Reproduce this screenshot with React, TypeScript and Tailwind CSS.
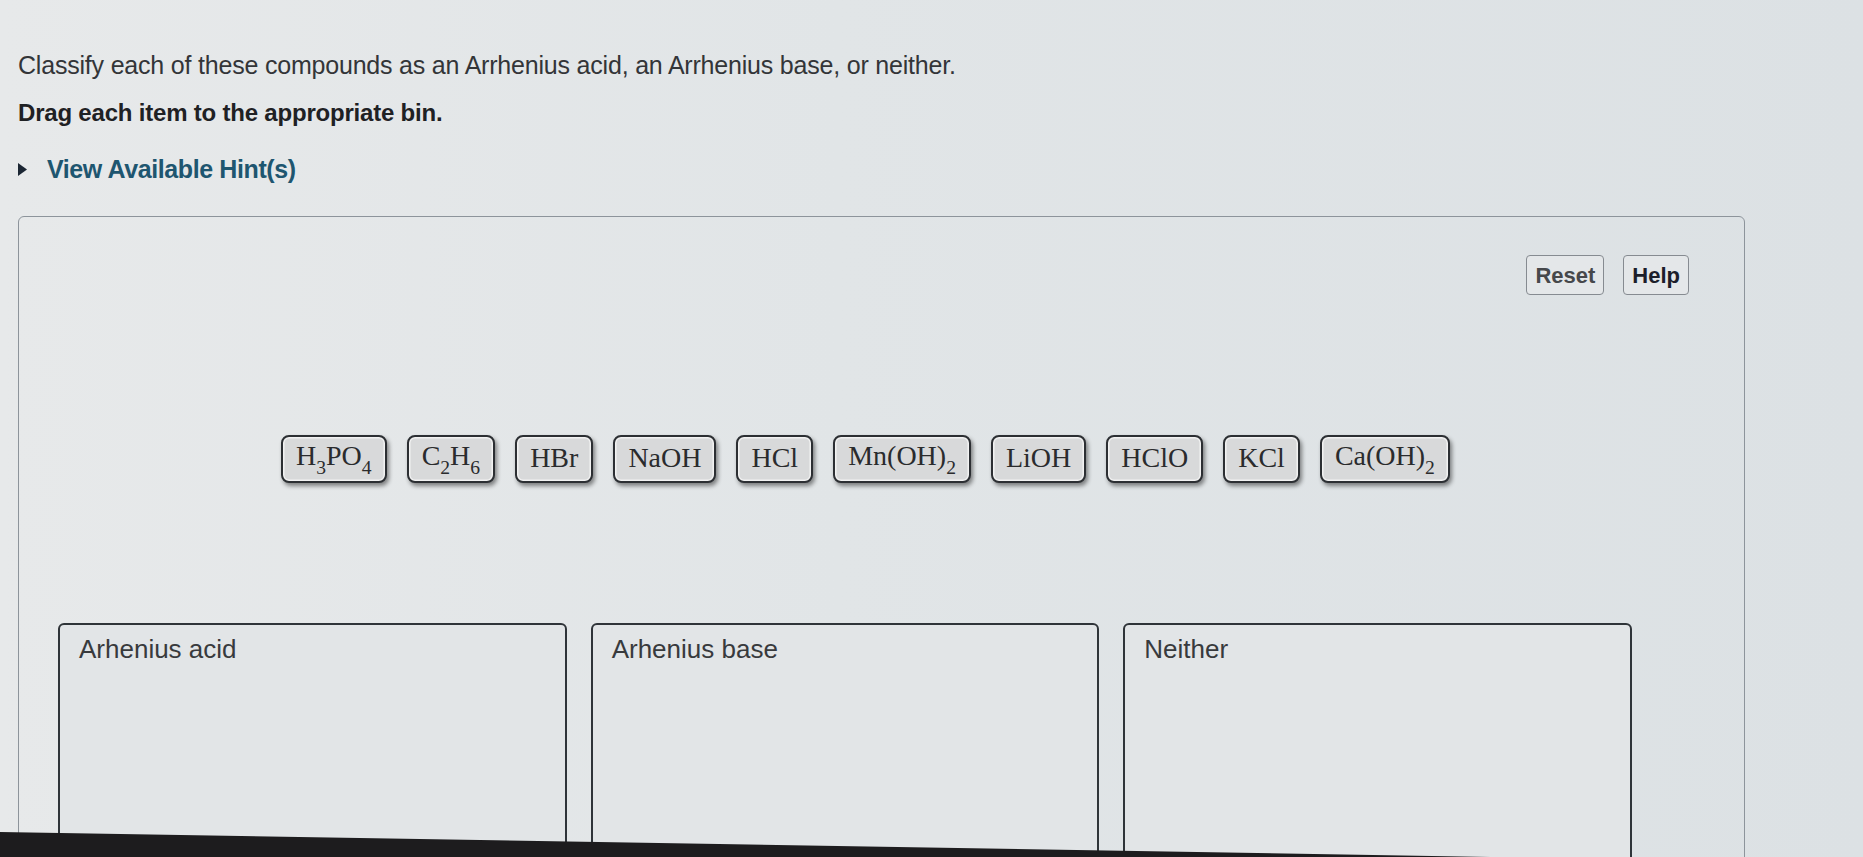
import { ReactNode } from "react";

type Compound = { id: string; label: ReactNode };

const sub = (n: string) => <sub className="text-[0.7em] align-[-0.2em] leading-none">{n}</sub>;

const compounds: Compound[] = [
  { id: "h3po4", label: <>H{sub("3")}PO{sub("4")}</> },
  { id: "c2h6", label: <>C{sub("2")}H{sub("6")}</> },
  { id: "hbr", label: <>HBr</> },
  { id: "naoh", label: <>NaOH</> },
  { id: "hcl", label: <>HCl</> },
  { id: "mnoh2", label: <>Mn(OH){sub("2")}</> },
  { id: "lioh", label: <>LiOH</> },
  { id: "hclo", label: <>HClO</> },
  { id: "kcl", label: <>KCl</> },
  { id: "caoh2", label: <>Ca(OH){sub("2")}</> },
];

const bins = ["Arhenius acid", "Arhenius base", "Neither"];

export default function App() {
  return (
    <div className="relative h-[857px] overflow-hidden bg-[linear-gradient(90deg,#e7e9ea_0%,#e1e5e7_45%,#dce1e4_100%)] text-[#2a2c2f] font-['Liberation_Sans',Arial,sans-serif]">
      <div className="pl-[18px] pt-[49px]">
        {/* Instructions */}
        <p className="text-[25px] leading-[32px] text-[#333538] tracking-[-0.2px]">
          Classify each of these compounds as an Arrhenius acid, an Arrhenius base, or neither.
        </p>
        <p className="mt-[16px] text-[24px] leading-[32px] font-bold text-[#1f2124] tracking-[-0.2px]">
          Drag each item to the appropriate bin.
        </p>
        <button className="mt-[24px] flex items-center gap-[20px] text-[25px] leading-[32px] font-bold text-[#1e5670] tracking-[-0.4px]">
          <svg width="9" height="13" viewBox="0 0 9 13" className="fill-[#1b2633]">
            <path d="M0 0 L9 6.5 L0 13 Z" />
          </svg>
          View Available Hint(s)
        </button>
      </div>

      {/* Drag-and-drop area */}
      <div className="ml-[18px] mt-[31px] w-[1727px] h-[700px] rounded-[6px] border border-[#8d949b] pl-[39px] pr-[112px] pt-[38px]">
        <div className="flex justify-end gap-[19px] -mr-[57px]">
          <button className="h-[40px] px-[8px] rounded-[4px] border border-[#868b91] bg-[#e4e7e9] text-[22px] font-bold text-[#46484b]">
            Reset
          </button>
          <button className="h-[40px] px-[8px] rounded-[4px] border border-[#868b91] bg-[#e4e7e9] text-[22px] font-bold text-[#1c1e2a]">
            Help
          </button>
        </div>

        <div className="mt-[140px] flex items-center gap-[20px] pl-[223px]">
          {compounds.map((c) => (
            <div
              key={c.id}
              className="h-[48px] px-[13px] flex items-center rounded-[8px] border-[2.5px] border-[#2c2f33] bg-[#d8d9da] font-['Liberation_Serif','Times_New_Roman',serif] text-[28px] leading-none text-[#2a2b2d] shadow-[inset_0_0_0_1.5px_#f2f2f2,2px_3px_4px_rgba(0,0,0,0.45)]"
            >
              <span className="-mt-[3px]">{c.label}</span>
            </div>
          ))}
        </div>

        <div className="mt-[140px] grid grid-cols-3 gap-[24px]">
          {bins.map((b) => (
            <div
              key={b}
              className="h-[260px] rounded-t-[6px] border-2 border-[#2f3439] bg-[#e2e5e7] px-[19px] pt-[8px]"
            >
              <span className="text-[26px] leading-[32px] text-[#383a3d]">{b}</span>
            </div>
          ))}
        </div>
      </div>

      {/* monitor bezel edge */}
      <div className="absolute bottom-0 left-0 w-full h-[25px] bg-[#1d1c1e] [clip-path:polygon(0_0,80%_100%,0_100%)]" />
    </div>
  );
}
